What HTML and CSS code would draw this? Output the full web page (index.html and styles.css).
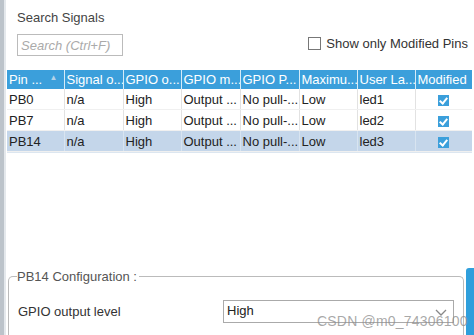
FILE: index.html
```html
<!DOCTYPE html>
<html lang="en">
<head>
  <meta charset="UTF-8" />
  <title>Pinout Configuration</title>
  <link rel="stylesheet" href="styles.css">
</head>
<body>
  <div class="side"></div>
  <div class="content">
    <section class="search">
      <div class="search-title">Search Signals</div>
      <div class="search-row">
        <input type="text" class="search-input" placeholder="Search (Ctrl+F)" />
        <label class="only-mod"><span class="box"></span>Show only Modified Pins</label>
      </div>
    </section>

    <div class="grid-wrap">
      <table class="pins">
        <colgroup>
          <col style="width:57px"><col style="width:59px"><col style="width:58px"><col style="width:59px">
          <col style="width:59px"><col style="width:58px"><col style="width:58px"><col style="width:57px">
        </colgroup>
        <thead>
          <tr>
            <th>Pin ... <span class="sort">&#9650;</span></th>
            <th>Signal o...</th>
            <th>GPIO o...</th>
            <th>GPIO m...</th>
            <th>GPIO P...</th>
            <th>Maximu...</th>
            <th>User La...</th>
            <th>Modified</th>
          </tr>
        </thead>
        <tbody>
          <tr>
            <td>PB0</td><td>n/a</td><td>High</td><td>Output ...</td><td>No pull-...</td><td>Low</td><td>led1</td>
            <td class="mod"><span class="tick"></span></td>
          </tr>
          <tr>
            <td>PB7</td><td>n/a</td><td>High</td><td>Output ...</td><td>No pull-...</td><td>Low</td><td>led2</td>
            <td class="mod"><span class="tick"></span></td>
          </tr>
          <tr class="selected">
            <td>PB14</td><td>n/a</td><td>High</td><td>Output ...</td><td>No pull-...</td><td>Low</td><td>led3</td>
            <td class="mod"><span class="tick"></span></td>
          </tr>
        </tbody>
      </table>
    </div>

    <fieldset class="config">
      <legend>PB14 Configuration :</legend>
      <div class="field">
        <span class="field-label">GPIO output level</span>
        <div class="select">High
          <svg class="chev" width="12" height="8" viewBox="0 0 12 8"><path d="M1 1 L6 6 L11 1" fill="none" stroke="#888" stroke-width="1.3"/></svg>
        </div>
      </div>
    </fieldset>
  </div>
  <div class="scroll-thumb"></div>
  <div class="watermark">CSDN @m0_74306100</div>
</body>
</html>
```

FILE: styles.css
```css
html, body {margin: 0; height: 100%; overflow: hidden;}
body {display: flex; font-family: "Liberation Sans", Arial, sans-serif; font-size: 13px; color: #222; background: #fff; position: relative;}
.side {width: 4px; background: #bcc3ca; flex-shrink: 0;}
.content {flex: 1; border-left: 2px solid #e4e8ec; padding-left: 1px; display: flex; flex-direction: column;}

.search {padding: 10px 6px 0 10px;}
.search-title {color: #444; line-height: 16px;}
.search-row {display: flex; justify-content: space-between; align-items: flex-start; margin-top: 8px;}
.search-input {width: 106px; height: 22px; box-sizing: border-box; border: 1px solid #bbb; padding: 0 3px; font-family: inherit; font-size: 13px; margin: 0;}
.search-input::placeholder {color: #aaa; font-style: italic;}
.only-mod {display: flex; align-items: center; gap: 5px; color: #333; margin-top: 2px;}
.only-mod .box {width: 11px; height: 11px; border: 1px solid #777; background: #fff;}

.grid-wrap {margin-top: 14px; border-bottom: 1px solid #dce6f0; width: 465px;}
.pins {border-collapse: collapse; table-layout: fixed; width: 465px;}
.pins th {background: #3b9fdb; color: #fff; font-weight: normal; text-align: left; height: 19px; padding: 0 2px; white-space: nowrap; overflow: hidden; border-right: 1px solid #d6ebf7; position: relative;}
.pins th:last-child {border-right: none;}
.pins td {height: 20px; padding: 0 2px; white-space: nowrap; overflow: hidden; border-right: 1px solid #e2e2e2; border-bottom: 1px solid #f0f0f0;}
.pins td:last-child {border-right: none;}
.pins tr.selected td {background: #c4d6ea; border-right-color: #d8e4f0;}
.sort {font-size: 8px; color: #b4d2e8; position: absolute; right: 6px; top: 3px;}
.pins td.mod {text-align: center;}
.tick {display: inline-block; width: 11px; height: 11px; background: #3b9fdb; position: relative; vertical-align: middle;}
.tick::after {content: ""; position: absolute; left: 3px; top: 1px; width: 3px; height: 6px; border: solid #fff; border-width: 0 2px 2px 0; transform: rotate(40deg);}

.config {margin: 116px 10px 0 1px; border: 1px solid #bbb; border-radius: 5px; border-bottom: none; border-bottom-left-radius: 0; border-bottom-right-radius: 0; padding: 16px 0 20px 9px; flex: 1;}
.config legend {color: #555; padding: 0 2px 0 0; margin-left: -1px;}
.field {display: flex; align-items: center;}
.field-label {width: 205px; color: #333;}
.select {width: 231px; height: 23px; box-sizing: border-box; border: 1px solid #aaa; padding: 2px 3px; position: relative; color: #222;}
.chev {position: absolute; right: 6px; top: 8px;}

.scroll-thumb {position: absolute; right: 0; top: 268px; width: 8px; bottom: 0; background: #2f9fdc; border-radius: 3px 0 0 0;}
.watermark {position: absolute; left: 317px; top: 313px; font-size: 14px; color: rgba(140,140,140,0.75); letter-spacing: 0.2px;}
```
